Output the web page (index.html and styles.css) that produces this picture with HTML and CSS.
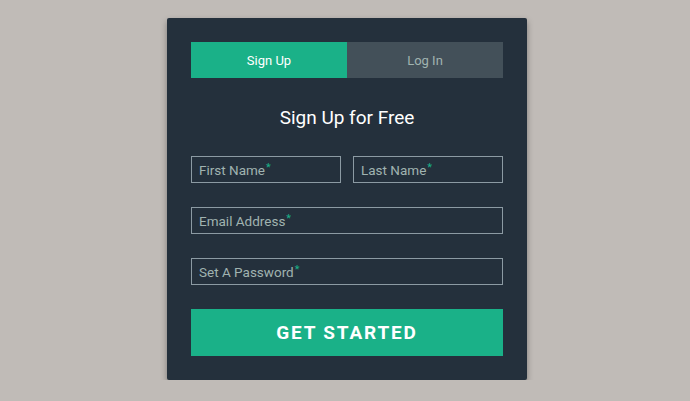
FILE: index.html
```html
<!DOCTYPE html>
<html lang="en">
<head>
  <meta charset="UTF-8">
  <title>Sign Up</title>
  <link rel="stylesheet" href="styles.css">
</head>
<body>
  <div class="frm_wrap">
    <div class="tab_grp">
      <div class="tab tab_on">Sign Up</div>
      <div class="tab">Log In</div>
    </div>

    <h1>Sign Up for Free</h1>

    <div class="row_2">
      <label class="fld">First Name<span class="req">*</span></label>
      <label class="fld">Last Name<span class="req">*</span></label>
    </div>
    <label class="fld">Email Address<span class="req">*</span></label>
    <label class="fld">Set A Password<span class="req">*</span></label>

    <button class="btn_go">GET STARTED</button>
  </div>
</body>
</html>
```

FILE: styles.css
```css
:root {
  --bg: #c0bbb7;
  --card: #24303c;
  --teal: #1ab188;
  --tab: #435059;
  --muted: #a0b3b0;
}

body {
  margin: 0;
  padding: 18px 0 0 4px;
  background-color: var(--bg);
  font-family: Roboto, sans-serif;
  color: #fff;
}

.frm_wrap {
  background-color: var(--card);
  width: 312px;
  margin: 0 auto;
  padding: 24px;
  border-radius: 2px;
  box-shadow: 0 3px 6px rgba(0,0,0,0.35);
  display: flex;
  flex-direction: column;
  gap: 24px;
}

.tab_grp {
  display: flex;
  height: 36px;
}

.tab {
  flex: 1;
  display: flex;
  align-items: center;
  justify-content: center;
  background-color: var(--tab);
  color: var(--muted);
  font-size: 13px;
}

.tab_on {
  background-color: var(--teal);
  color: #fff;
}

h1 {
  margin: 4px 0 2px;
  font-size: 19px;
  font-weight: 400;
  line-height: 24px;
  text-align: center;
}

.row_2 {
  display: flex;
  gap: 12px;
}

.row_2 .fld {
  flex: 1;
}

.fld {
  height: 27px;
  flex-shrink: 0;
  box-sizing: border-box;
  border: 1px solid #8c9aa3;
  display: flex;
  align-items: center;
  padding-left: 7px;
  color: var(--muted);
  font-size: 13.5px;
}

.req {
  color: var(--teal);
  font-size: 11px;
  margin: -4px 0 0 1px;
}

.btn_go {
  height: 47px;
  border: none;
  background-color: var(--teal);
  color: #fff;
  font-family: Roboto, sans-serif;
  font-size: 19px;
  font-weight: 700;
  letter-spacing: 1.8px;
  padding: 0;
}
```
